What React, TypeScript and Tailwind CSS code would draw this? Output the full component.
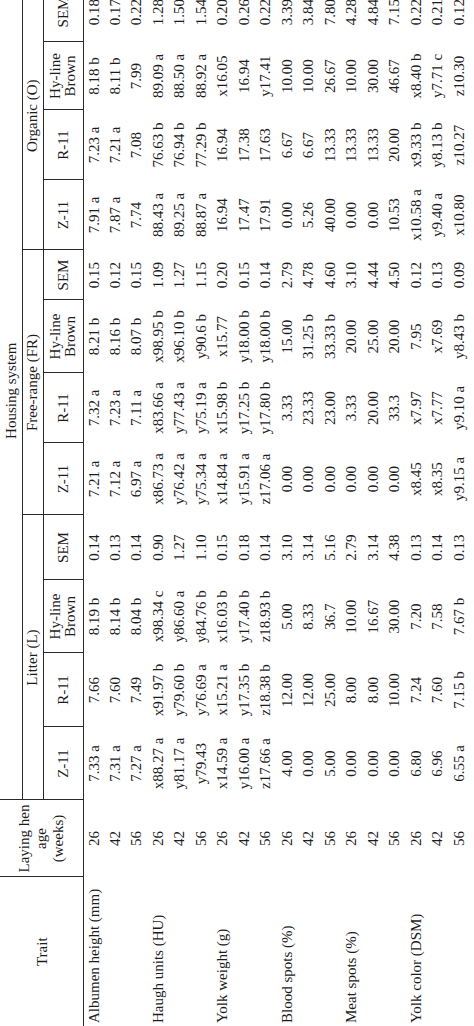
const colWidths = [149, 77, 73, 74, 73, 65, 72, 70, 73, 50, 70, 70, 68, 60];

const subHeads = ["Z-11", "R-11", "Hy-line|Brown", "SEM"];

const rows: [string, string, string[]][] = [
  ["Albumen height (mm)", "26", ["7.33 a", "7.66", "8.19 b", "0.14", "7.21 a", "7.32 a", "8.21 b", "0.15", "7.91 a", "7.23 a", "8.18 b", "0.18"]],
  ["", "42", ["7.31 a", "7.60", "8.14 b", "0.13", "7.12 a", "7.23 a", "8.16 b", "0.12", "7.87 a", "7.21 a", "8.11 b", "0.17"]],
  ["", "56", ["7.27 a", "7.49", "8.04 b", "0.14", "6.97 a", "7.11 a", "8.07 b", "0.15", "7.74", "7.08", "7.99", "0.22"]],
  ["Haugh units (HU)", "26", ["x88.27 a", "x91.97 b", "x98.34 c", "0.90", "x86.73 a", "x83.66 a", "x98.95 b", "1.09", "88.43 a", "76.63 b", "89.09 a", "1.28"]],
  ["", "42", ["y81.17 a", "y79.60 b", "y86.60 a", "1.27", "y76.42 a", "y77.43 a", "x96.10 b", "1.27", "89.25 a", "76.94 b", "88.50 a", "1.50"]],
  ["", "56", ["y79.43", "y76.69 a", "y84.76 b", "1.10", "y75.34 a", "y75.19 a", "y90.6 b", "1.15", "88.87 a", "77.29 b", "88.92 a", "1.54"]],
  ["Yolk weight (g)", "26", ["x14.59 a", "x15.21 a", "x16.03 b", "0.15", "x14.84 a", "x15.98 b", "x15.77", "0.20", "16.94", "16.94", "x16.05", "0.20"]],
  ["", "42", ["y16.00 a", "y17.35 b", "y17.40 b", "0.18", "y15.91 a", "y17.25 b", "y18.00 b", "0.15", "17.47", "17.38", "16.94", "0.26"]],
  ["", "56", ["z17.66 a", "z18.38 b", "z18.93 b", "0.14", "z17.06 a", "y17.80 b", "y18.00 b", "0.14", "17.91", "17.63", "y17.41", "0.22"]],
  ["Blood spots (%)", "26", ["4.00", "12.00", "5.00", "3.10", "0.00", "3.33", "15.00", "2.79", "0.00", "6.67", "10.00", "3.39"]],
  ["", "42", ["0.00", "12.00", "8.33", "3.14", "0.00", "23.33", "31.25 b", "4.78", "5.26", "6.67", "10.00", "3.84"]],
  ["", "56", ["5.00", "25.00", "36.7", "5.16", "0.00", "23.00", "33.33 b", "4.60", "40.00", "13.33", "26.67", "7.80"]],
  ["Meat spots (%)", "26", ["0.00", "8.00", "10.00", "2.79", "0.00", "3.33", "20.00", "3.10", "0.00", "13.33", "10.00", "4.28"]],
  ["", "42", ["0.00", "8.00", "16.67", "3.14", "0.00", "20.00", "25.00", "4.44", "0.00", "13.33", "30.00", "4.84"]],
  ["", "56", ["0.00", "10.00", "30.00", "4.38", "0.00", "33.3", "20.00", "4.50", "10.53", "20.00", "46.67", "7.15"]],
  ["Yolk color (DSM)", "26", ["6.80", "7.24", "7.20", "0.13", "x8.45", "x7.97", "7.95", "0.12", "x10.58 a", "x9.33 b", "x8.40 b", "0.22"]],
  ["", "42", ["6.96", "7.60", "7.58", "0.14", "x8.35", "x7.77", "x7.69", "0.13", "y9.40 a", "y8.13 b", "y7.71 c", "0.21"]],
  ["", "56", ["6.55 a", "7.15 b", "7.67 b", "0.13", "y9.15 a", "y9.10 a", "y8.43 b", "0.09", "x10.80", "z10.27", "z10.30", "0.12"]],
];

const groups = ["Litter (L)", "Free-range (FR)", "Organic (O)"];

export default function App() {
  return (
    <div className="h-[1026px] w-[474px] overflow-hidden bg-white">
      {/* the page is a scan of a table turned on its side */}
      <div className="h-[474px] w-[1044px] origin-top-left [transform:translateY(1026px)_rotate(-90deg)]">
        <table className="w-[1044px] table-fixed border-collapse font-['Liberation_Serif',serif] text-[15px] text-[#1c1c1c]">
          <colgroup>
            {colWidths.map((w, i) => (
              <col key={i} style={{ width: w }} />
            ))}
          </colgroup>
          <thead className="leading-[15px]">
            <tr className="h-[22px]">
              <th rowSpan={3} className="border-r border-b border-[#2a2a2a] pt-[2px] text-center font-normal">
                Trait
              </th>
              <th rowSpan={3} className="border-r border-b border-[#2a2a2a] text-center font-normal leading-[17px]">
                Laying hen
                <br />
                age
                <br />
                (weeks)
              </th>
              <th colSpan={12} className="border-b border-[#2a2a2a] pt-[2px] text-center font-normal whitespace-nowrap">
                Housing system
              </th>
            </tr>
            <tr className="h-[21px]">
              {groups.map((g, i) => (
                <th
                  key={g}
                  colSpan={4}
                  className={
                    i < 2
                      ? "border-r border-b border-[#2a2a2a] text-center font-normal whitespace-nowrap"
                      : "border-b border-[#2a2a2a] text-center font-normal whitespace-nowrap"
                  }
                >
                  {g}
                </th>
              ))}
            </tr>
            <tr className="h-[40px]">
              {groups.flatMap((g) =>
                subHeads.map((s) => (
                  <th
                    key={g + s}
                    className="border-r border-b border-[#2a2a2a] text-center font-normal whitespace-nowrap"
                  >
                    {s.split("|").map((part, k) => (
                      <div key={k}>{part}</div>
                    ))}
                  </th>
                ))
              )}
            </tr>
          </thead>
          <tbody className="leading-[15px]">
            {rows.map(([trait, age, values], r) => (
              <tr key={r} className="h-[21.5px]">
                <td className="whitespace-nowrap pl-[3px] text-left">{trait}</td>
                <td className="text-center">{age}</td>
                {values.map((v, c) => (
                  <td key={c} className="whitespace-nowrap text-center">
                    {v}
                  </td>
                ))}
              </tr>
            ))}
          </tbody>
        </table>
      </div>
    </div>
  );
}
